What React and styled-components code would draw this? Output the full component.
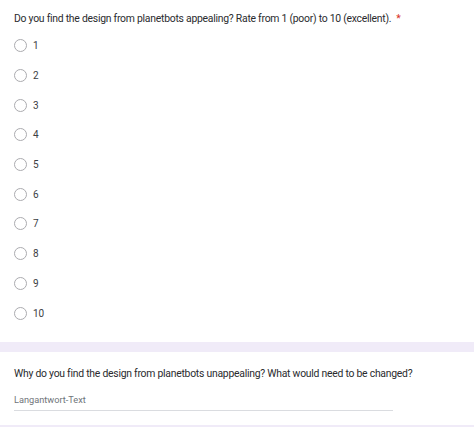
import React from "react";
import styled, { createGlobalStyle } from "styled-components";

const Global = createGlobalStyle`
  html, body { margin: 0; padding: 0; background: #f0ebf8; }
  body { font-family: Roboto, "Liberation Sans", Arial, sans-serif; }
`;

const Page = styled.div`
  width: 474px;
  height: 427px;
  overflow: hidden;
  display: flex;
  flex-direction: column;
  gap: 10px;
  background: #f0ebf8;
`;

const Card = styled.section`
  background: #ffffff;
  padding: ${(p) => p.$pad};
  display: flex;
  flex-direction: column;
`;

const Question = styled.div`
  font-size: 10.4px;
  line-height: 14px;
  color: #2a2b2e;
  letter-spacing: -0.25px;
  white-space: nowrap;
`;

const Star = styled.span`
  color: #d93025;
  margin-left: 5px;
`;

const Options = styled.div`
  display: flex;
  flex-direction: column;
  margin-top: 5px;
`;

const Option = styled.label`
  display: flex;
  align-items: center;
  height: 29.7px;
  gap: 6px;
  font-size: 10px;
  color: #3c4043;
`;

const Radio = styled.span`
  width: 13px;
  height: 13px;
  box-sizing: border-box;
  border-radius: 50%;
  border: 1.5px solid #ababaf;
  flex: none;
`;

const Placeholder = styled.div`
  margin-top: 13px;
  width: 379px;
  font-size: 9.2px;
  line-height: 12px;
  color: #70757a;
  padding-bottom: 4px;
  border-bottom: 1px solid #dadce0;
`;

export default function App() {
  const opts = [1, 2, 3, 4, 5, 6, 7, 8, 9, 10];
  return (
    <>
      <Global />
      <Page>
        <Card $pad="12px 14px 14px 14px">
          <Question>
            Do you find the design from planetbots appealing? Rate from 1 (poor) to 10 (excellent).
            <Star>*</Star>
          </Question>
          <Options>
            {opts.map((o) => (
              <Option key={o}>
                <Radio />
                {o}
              </Option>
            ))}
          </Options>
        </Card>
        <Card $pad="15px 14px 14px 14px">
          <Question>
            Why do you find the design from planetbots unappealing? What would need to be changed?
          </Question>
          <Placeholder>Langantwort-Text</Placeholder>
        </Card>
      </Page>
    </>
  );
}
